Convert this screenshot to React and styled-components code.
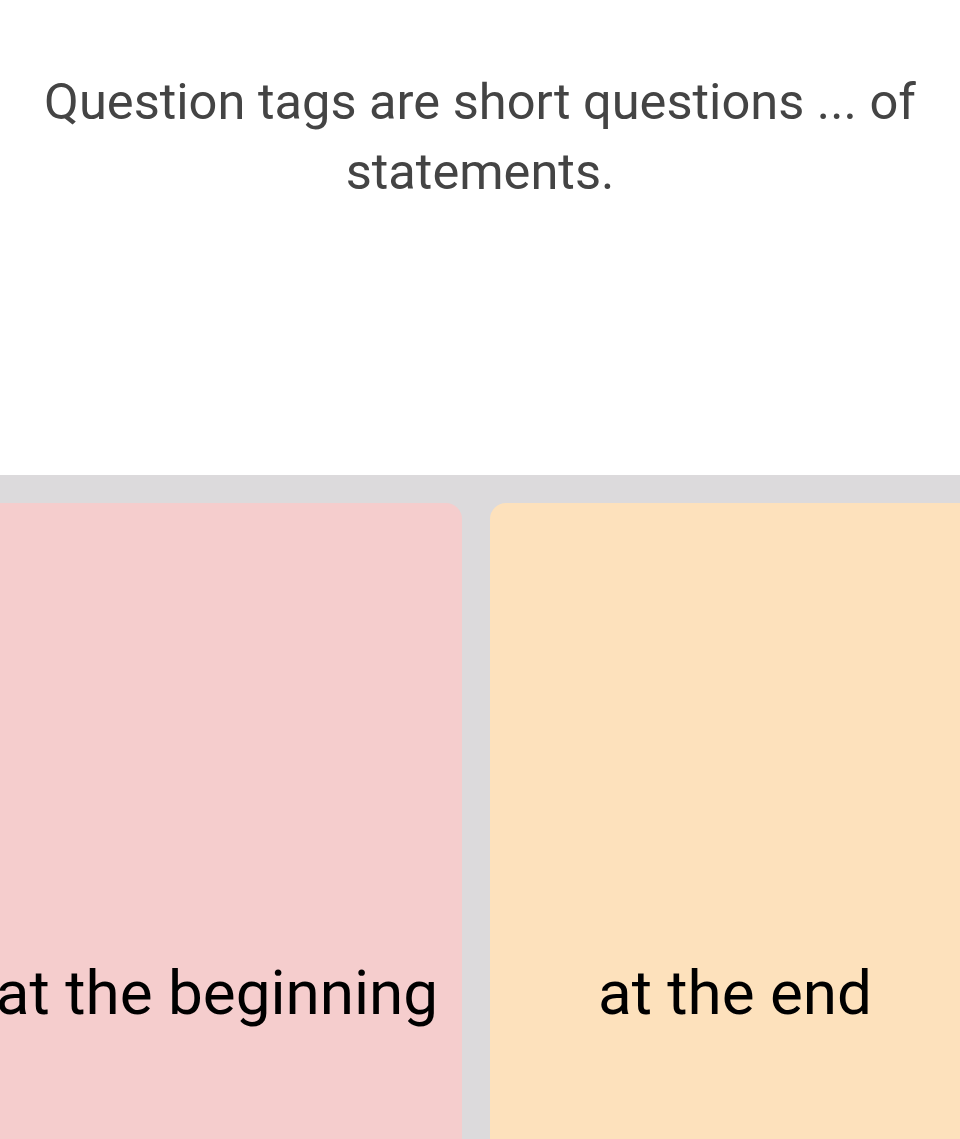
import styled, { createGlobalStyle } from "styled-components";

const GlobalStyle = createGlobalStyle`
    html, body {
        margin: 0;
        padding: 0;
        background: #fff;
        font-family: Roboto, "Liberation Sans", sans-serif;
    }
`;

const Page = styled.div`
    width: 960px;
    height: 1139px;
    display: flex;
    flex-direction: column;
    overflow: hidden;
`;

const Prompt = styled.div`
    height: 475px;
    box-sizing: border-box;
    padding: 67px 30px 0;
    text-align: center;
    color: #444444;
    font-size: 50.6px;
    line-height: 70px;
`;

// the answer row is wider than the screen, the first card runs off the left edge
const Board = styled.div`
    flex: 1;
    background: #dcdadc;
    padding-top: 28px;
    display: flex;
    gap: 28px;
    margin-left: -28px;
    width: 1008px;
`;

const Card = styled.div`
    flex: 0 0 490px;
    background: ${(p) => p.color};
    border-radius: 16px 16px 0 0;
    display: flex;
    justify-content: center;
    padding-top: 456px;
    box-sizing: border-box;
    color: #000;
    font-size: 62px;
    line-height: 68px;
    white-space: nowrap;
`;

function App() {
    return (
        <>
            <GlobalStyle />
            <Page>
                <Prompt>Question tags are short questions ... of statements.</Prompt>
                <Board>
                    <Card color="#f5cdcd">at the beginning</Card>
                    <Card color="#fde1bc">at the end</Card>
                </Board>
            </Page>
        </>
    );
}

export default App;
